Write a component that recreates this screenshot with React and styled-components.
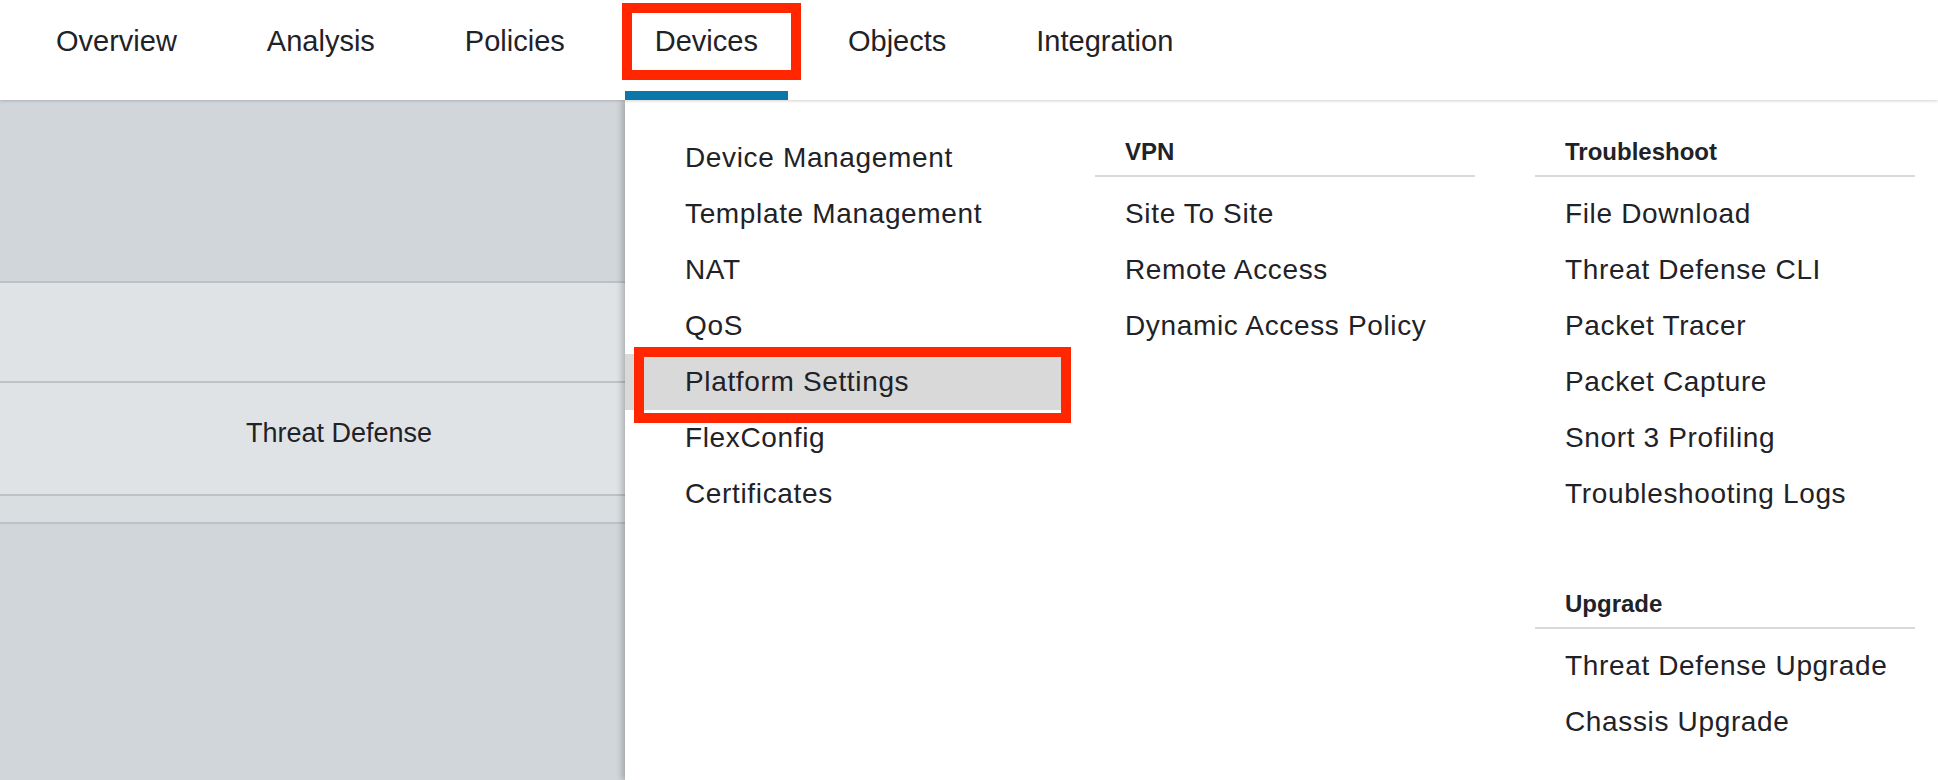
import styled, { createGlobalStyle } from "styled-components";

const GlobalStyle = createGlobalStyle`
  html, body {
    margin: 0;
    padding: 0;
  }
  body {
    font-family: "Liberation Sans", Arial, sans-serif;
    color: #1f2226;
    background: #ffffff;
  }
`;

const tabs = ["Overview", "Analysis", "Policies", "Devices", "Objects", "Integration"];

const deviceItems = [
  "Device Management",
  "Template Management",
  "NAT",
  "QoS",
  "Platform Settings",
  "FlexConfig",
  "Certificates",
];

const vpnItems = ["Site To Site", "Remote Access", "Dynamic Access Policy"];

const troubleshootItems = [
  "File Download",
  "Threat Defense CLI",
  "Packet Tracer",
  "Packet Capture",
  "Snort 3 Profiling",
  "Troubleshooting Logs",
];

const upgradeItems = ["Threat Defense Upgrade", "Chassis Upgrade"];

const App = () => {
  return (
    <Page>
      <GlobalStyle />
      <NavBar>
        {tabs.map((t) => (
          <Tab key={t} $active={t === "Devices"}>
            {t}
            {t === "Devices" && <Callout $top={3} $left={-3} $w={179} $h={77} />}
          </Tab>
        ))}
      </NavBar>
      <Body>
        <SidePanel>
          <PanelHeader />
          <PanelRow $h={98} $tone="#dfe3e6" />
          <PanelRow $h={111} $tone="#dfe3e6">
            <CellText>Threat Defense</CellText>
          </PanelRow>
          <PanelRow $h={26} $tone="#d9dee1" />
        </SidePanel>
        <Menu>
          <Column>
            {deviceItems.map((item) => (
              <MenuItem key={item} $selected={item === "Platform Settings"}>
                {item}
                {item === "Platform Settings" && (
                  <Callout $top={-7} $left={9} $w={437} $h={76} />
                )}
              </MenuItem>
            ))}
          </Column>
          <Column>
            <GroupTitle>VPN</GroupTitle>
            {vpnItems.map((item) => (
              <MenuItem key={item}>{item}</MenuItem>
            ))}
          </Column>
          <Column>
            <GroupTitle>Troubleshoot</GroupTitle>
            {troubleshootItems.map((item) => (
              <MenuItem key={item}>{item}</MenuItem>
            ))}
            <GroupTitle $spaced>Upgrade</GroupTitle>
            {upgradeItems.map((item) => (
              <MenuItem key={item}>{item}</MenuItem>
            ))}
          </Column>
        </Menu>
      </Body>
    </Page>
  );
};

export default App;

const Page = styled.div`
  width: 100%;
  height: 780px;
  overflow: hidden;
`;

const NavBar = styled.nav`
  position: relative;
  z-index: 2;
  display: flex;
  gap: 30px;
  height: 100px;
  padding-left: 26px;
  background: #ffffff;
  box-shadow: 0 1px 3px rgba(0, 0, 0, 0.18);
`;

const Tab = styled.div`
  position: relative;
  box-sizing: border-box;
  height: 100px;
  padding: 0 30px;
  font-size: 29px;
  line-height: 82px;
  white-space: nowrap;
  border-bottom: 9px solid ${(p) => (p.$active ? "#0b76a8" : "transparent")};
`;

const Callout = styled.span`
  position: absolute;
  top: ${(p) => p.$top}px;
  left: ${(p) => p.$left}px;
  width: ${(p) => p.$w}px;
  height: ${(p) => p.$h}px;
  box-sizing: border-box;
  border: 10px solid #ff2600;
  pointer-events: none;
  z-index: 3;
`;

const Body = styled.div`
  display: flex;
  height: 680px;
`;

const SidePanel = styled.div`
  flex: none;
  width: 625px;
  display: flex;
  flex-direction: column;
  background: #d1d6da;
`;

const PanelHeader = styled.div`
  height: 181px;
  border-bottom: 2px solid #bdc2c6;
`;

const PanelRow = styled.div`
  box-sizing: content-box;
  height: ${(p) => p.$h}px;
  display: flex;
  align-items: center;
  padding-left: 246px;
  background: ${(p) => p.$tone};
  border-bottom: 2px solid #bdc2c6;
`;

const CellText = styled.span`
  font-size: 27px;
  margin-bottom: 10px;
`;

const Menu = styled.div`
  position: relative;
  z-index: 1;
  flex: 1;
  display: grid;
  grid-template-columns: 440px 440px 440px;
  align-content: start;
  padding-top: 30px;
  background: #ffffff;
  box-shadow: -3px 0 6px rgba(0, 0, 0, 0.22);
`;

const Column = styled.div`
  display: flex;
  flex-direction: column;
`;

const MenuItem = styled.div`
  position: relative;
  height: 56px;
  line-height: 56px;
  padding-left: 60px;
  font-size: 28px;
  letter-spacing: 0.65px;
  white-space: nowrap;
  background: ${(p) => (p.$selected ? "#d9d9d9" : "transparent")};
`;

const GroupTitle = styled.div`
  height: 45px;
  margin: ${(p) => (p.$spaced ? "60px" : "0")} 30px 9px;
  padding-left: 30px;
  line-height: 43px;
  font-size: 24px;
  font-weight: 700;
  border-bottom: 2px solid #d9d9d9;
`;
